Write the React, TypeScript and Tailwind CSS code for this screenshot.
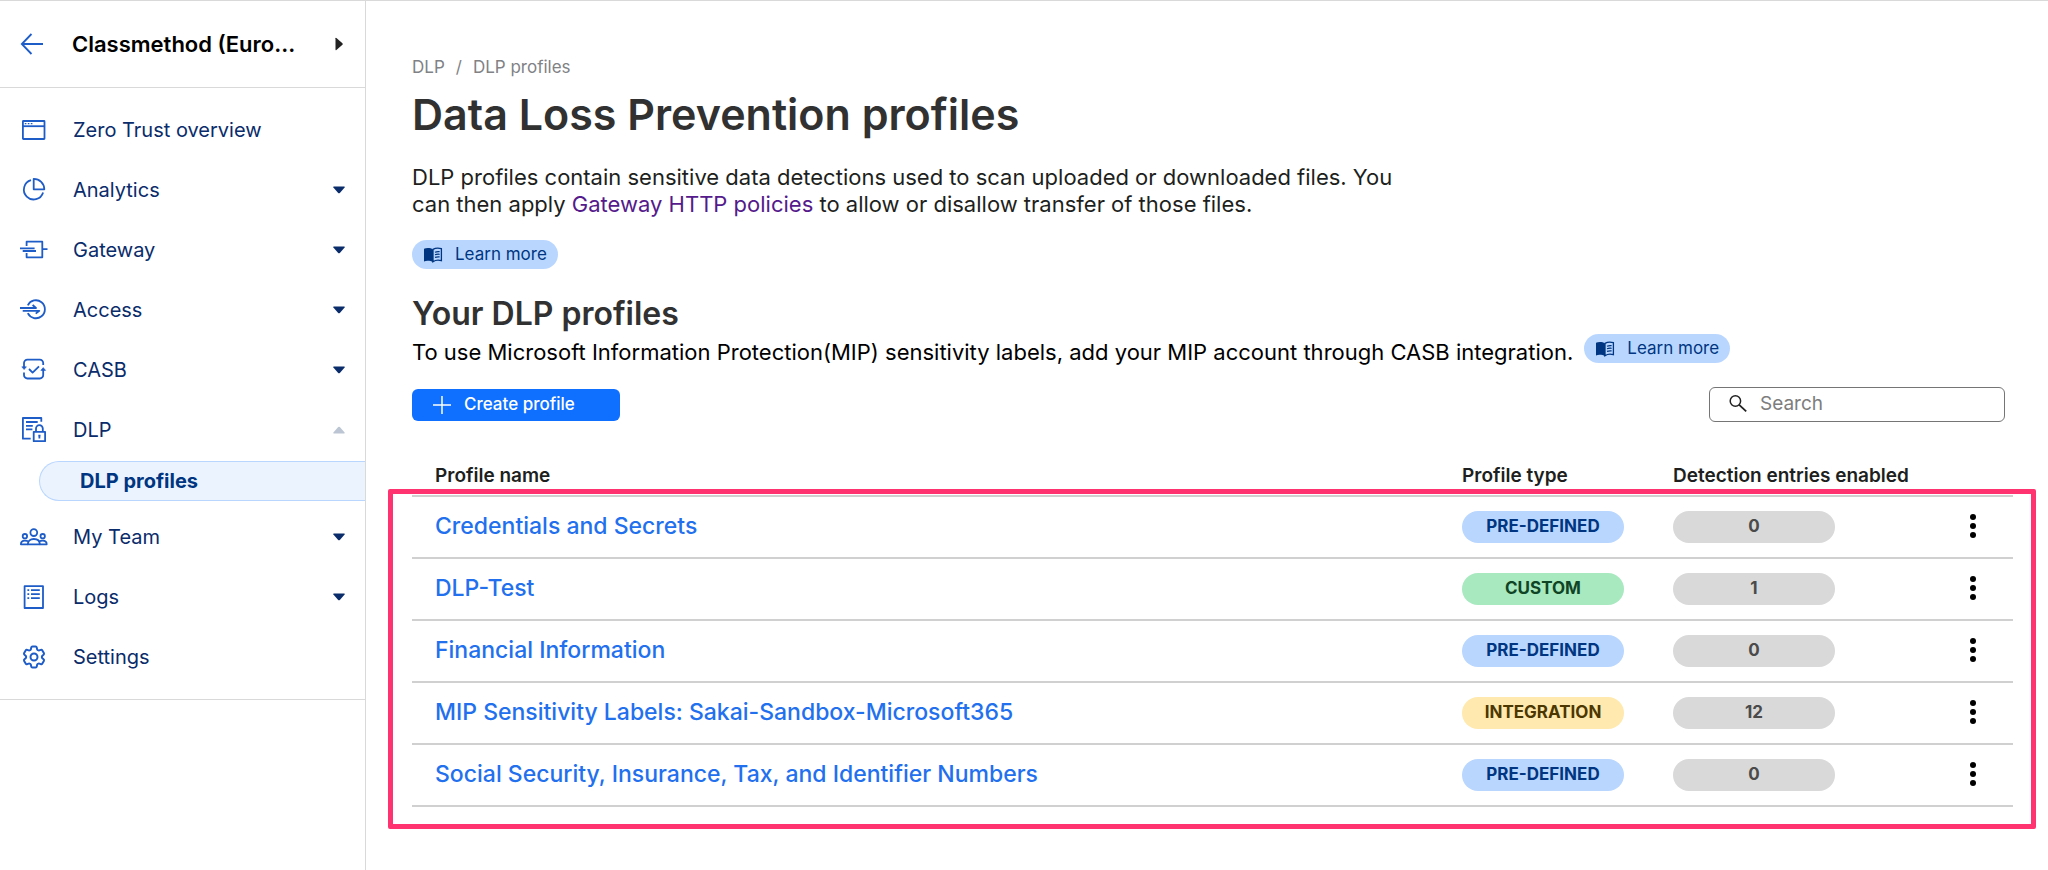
import React, { useState } from "react";
import { HiOutlineCog6Tooth } from "react-icons/hi2";

type IconProps = { children: React.ReactNode };

const NavIcon = ({ children }: IconProps) => (
  <svg
    viewBox="0 0 28 28"
    className="size-7 shrink-0"
    fill="none"
    stroke="currentColor"
    strokeWidth="1.8"
    strokeLinejoin="round"
    aria-hidden="true"
  >
    {children}
  </svg>
);

const OverviewIcon = () => (
  <NavIcon>
    <rect x="2.9" y="5" width="21.6" height="18" rx="0.5" />
    <path d="M2.7 10.2h22" />
    <path d="M4.8 7.6h1.6M7.8 7.6h1.6M10.8 7.6h1.6" strokeWidth="1.4" />
  </NavIcon>
);

const AnalyticsIcon = () => (
  <NavIcon>
    <path d="M11 4.2A9.8 9.8 0 1 0 23.1 16.4" />
    <path d="M13.7 2.8v10.5h10.6A10.5 10.5 0 0 0 13.7 2.8z" />
  </NavIcon>
);

const GatewayIcon = () => (
  <NavIcon>
    <path d="M6.6 10V5.7h15.7v15.6H6.6V17" />
    <path d="M0 12.3h14.6M2.7 15h13.3M22.3 13.2h5.2" />
  </NavIcon>
);

const AccessIcon = () => (
  <NavIcon>
    <path d="M7.8 9.3A9 9 0 1 1 7.8 17.2" />
    <path d="M0 12h16l-3.4-3M2.7 14.8h16.6l-3.6 2.8" />
  </NavIcon>
);

const CasbIcon = () => (
  <NavIcon>
    <path d="M4 12V7a3.4 3.4 0 0 1 3.4-3.4h12.4A3.4 3.4 0 0 1 23.2 7v2" />
    <path d="M23.2 13v6a3.4 3.4 0 0 1-3.4 3.5H7.4A3.4 3.4 0 0 1 4 19v-2.6" />
    <path d="M9 13l3.6 3.6 6.4-6.3" />
    <path d="M1.8 10.8h4.6L4.1 13.6zM20.8 14.4h4.8l-2.4-2.8z" fill="currentColor" strokeWidth="0.6" />
  </NavIcon>
);

const DlpIcon = () => (
  <NavIcon>
    <path d="M10.7 22.7H2.9V2h18.4v3.8" />
    <path d="M6 6h11.7M6 9.8h6.8M6 13.4h6.4" />
    <rect x="13.7" y="15.8" width="11.4" height="9.4" />
    <path d="M16 15.8v-3.3a3.4 3.4 0 0 1 6.8 0v3.3" />
    <path d="M19.4 18.8v3.6M18.3 19.6h2.2" />
  </NavIcon>
);

const TeamIcon = () => (
  <NavIcon>
    <circle cx="13.8" cy="9.6" r="3.4" />
    <circle cx="4.9" cy="13.2" r="2.2" />
    <circle cx="22.7" cy="13.2" r="2.2" />
    <path d="M7.8 21.3c0-3.4 2.4-5.3 6-5.3s6 1.9 6 5.3z" />
    <path d="M7.8 21.3H.9c0-2.6 1.5-3.7 4-3.7 1.4 0 2.5.2 3.3.8M19.8 21.3h6.9c0-2.6-1.5-3.7-4-3.7-1.4 0-2.5.2-3.3.8" />
  </NavIcon>
);

const LogsIcon = () => (
  <NavIcon>
    <rect x="4.6" y="3.2" width="18.4" height="21.8" />
    <path d="M7.4 7.2h1.8M11 7.2h8.8M7.4 11.2h1.8M11 11.2h8.8M7.4 15.2h1.8M11 15.2h8.8" />
  </NavIcon>
);

const SettingsIcon = () => (
  <HiOutlineCog6Tooth className="size-7 shrink-0" strokeWidth={1.7} aria-hidden="true" />
);

const BookIcon = () => (
  <svg viewBox="0 0 20 16" className="h-4 w-5 shrink-0" aria-hidden="true">
    <path d="M10 2.4C7.6.8 3.6.6 1 1.8v12.6c2.8-1 6.4-.8 9 .9z" fill="currentColor" />
    <path
      d="M10 2.4c2.3-1.4 5.8-1.6 8.4-.7v12c-2.8-.8-6-.6-8.4 1z"
      fill="none"
      stroke="currentColor"
      strokeWidth="1.3"
    />
    <path
      d="M12 5.2c1.5-.6 3-.7 4.6-.5M12 7.8c1.5-.6 3-.7 4.6-.5M12 10.4c1.5-.6 3-.7 4.6-.5"
      fill="none"
      stroke="currentColor"
      strokeWidth="1.2"
    />
  </svg>
);

const Caret = ({ open }: { open: boolean }) => (
  <svg
    viewBox="0 0 12 8"
    className={open ? "h-2 w-3 rotate-180 text-[#bcc5d3]" : "h-2 w-3 text-[#0a2c6b]"}
    aria-hidden="true"
  >
    <path d="M.6.6h10.8q.6.3.2.9L6.8 6.9q-.8.8-1.6 0L.4 1.5Q0 .9.6.6z" fill="currentColor" />
  </svg>
);

const navItems = [
  { label: "Zero Trust overview", Icon: OverviewIcon },
  { label: "Analytics", Icon: AnalyticsIcon, expandable: true },
  { label: "Gateway", Icon: GatewayIcon, expandable: true },
  { label: "Access", Icon: AccessIcon, expandable: true },
  { label: "CASB", Icon: CasbIcon, expandable: true },
  { label: "DLP", Icon: DlpIcon, expandable: true, children: ["DLP profiles"] },
  { label: "My Team", Icon: TeamIcon, expandable: true },
  { label: "Logs", Icon: LogsIcon, expandable: true },
  { label: "Settings", Icon: SettingsIcon },
];

const typeStyles = {
  "PRE-DEFINED": "bg-[#b9d6ff] text-[#003681]",
  CUSTOM: "bg-[#a8e9c0] text-[#0f4424]",
  INTEGRATION: "bg-[#ffe9ae] text-[#4d3700]",
};

const profiles: { name: string; type: keyof typeof typeStyles; entries: number }[] = [
  { name: "Credentials and Secrets", type: "PRE-DEFINED", entries: 0 },
  { name: "DLP-Test", type: "CUSTOM", entries: 1 },
  { name: "Financial Information", type: "PRE-DEFINED", entries: 0 },
  { name: "MIP Sensitivity Labels: Sakai-Sandbox-Microsoft365", type: "INTEGRATION", entries: 12 },
  { name: "Social Security, Insurance, Tax, and Identifier Numbers", type: "PRE-DEFINED", entries: 0 },
];

const LearnMore = () => (
  <a
    href="#"
    className="inline-flex h-[29px] w-[146px] shrink-0 items-center gap-3 rounded-full bg-[#b9d6ff] pl-[11px] text-[17px] whitespace-nowrap text-[#003681]"
  >
    <BookIcon />
    Learn more
  </a>
);

const Sidebar = () => {
  const [openItem, setOpenItem] = useState("DLP");

  return (
    <aside className="w-[366px] shrink-0 border-r border-[#d9d9d9]">
      <div className="flex h-[87px] items-center border-b border-[#d9d9d9] pr-[22px] pl-5">
        <a href="#" aria-label="Back" className="text-[#1e5cc8]">
          <svg viewBox="0 0 24 24" className="size-6" fill="none" stroke="currentColor" strokeWidth="1.8">
            <path d="M23 12H2M11.5 2L1.8 12l9.7 10" />
          </svg>
        </a>
        <button className="ml-7 flex flex-1 items-center justify-between text-[22px] font-semibold text-black">
          Classmethod (Euro...
          <svg viewBox="0 0 8 14" className="h-3.5 w-2 text-[#222]" aria-hidden="true">
            <path d="M.5 1.2Q.6.4 1.4 1l6 5.2q.8.8 0 1.6l-6 5.2q-.8.6-.9-.2z" fill="currentColor" />
          </svg>
        </button>
      </div>

      <nav className="border-b border-[#d9d9d9] py-3">
        {navItems.map(({ label, Icon, expandable, children }) => {
          const open = openItem === label;
          return (
            <div key={label}>
              <button
                onClick={() => setOpenItem(open ? "" : label)}
                className="flex h-[60px] w-full items-center pr-5 pl-5 text-xl text-[#0a2c6b]"
              >
                <span className="text-[#1e5cc8]">
                  <Icon />
                </span>
                <span className="ml-[25px] flex-1 text-left">{label}</span>
                {expandable && <Caret open={open} />}
              </button>
              {open &&
                children?.map((child) => (
                  <a
                    key={child}
                    href="#"
                    className="mt-px mb-1.5 ml-[39px] flex h-10 items-center rounded-l-full border border-r-0 border-[#b9d6ff] bg-[#ebf3fe] pl-10 text-xl font-bold text-[#003681]"
                  >
                    {child}
                  </a>
                ))}
            </div>
          );
        })}
      </nav>
    </aside>
  );
};

const App: React.FC = () => {
  const [query, setQuery] = useState("");
  const rows = profiles.filter((p) => p.name.toLowerCase().includes(query.toLowerCase()));

  return (
    <div className="flex min-h-screen border-t border-[#d9d9d9] bg-white font-['Inter','Liberation_Sans',sans-serif] text-[#1d1f20]">
      <Sidebar />

      <main className="min-w-0 flex-1 pt-[57px] pr-[35px] pb-10 pl-[46px]">
        <nav aria-label="Breadcrumb" className="flex h-5 items-center gap-[11px] text-[17px] text-[#808285]">
          <a href="#">DLP</a>
          <span>/</span>
          <span>DLP profiles</span>
        </nav>

        <h1 className="mt-2.5 text-[43px] leading-[52px] font-semibold text-[#313131]">
          Data Loss Prevention profiles
        </h1>

        <p className="mt-6 max-w-[1000px] text-[22px] leading-[27px]">
          DLP profiles contain sensitive data detections used to scan uploaded or downloaded files. You
          can then apply{" "}
          <a href="#" className="text-[#551a8b]">
            Gateway HTTP policies
          </a>{" "}
          to allow or disallow transfer of those files.
        </p>

        <div className="mt-[22px] flex">
          <LearnMore />
        </div>

        <h2 className="mt-[25px] text-[32px] leading-10 font-semibold text-[#313131]">Your DLP profiles</h2>
        <div className="flex items-start gap-[11px]">
          <p className="pt-[5px] text-[22px] leading-[27px] text-black">
            To use Microsoft Information Protection(MIP) sensitivity labels, add your MIP account through
            CASB integration.
          </p>
          <LearnMore />
        </div>

        {/* TOOLBAR */}
        <div className="mt-[21px] flex items-center justify-between pr-2">
          <button className="flex h-8 w-[208px] items-center gap-3 rounded-md bg-[#0f6fff] pl-5 text-[17px] font-medium text-white">
            <svg viewBox="0 0 20 20" className="size-5" stroke="currentColor" strokeWidth="1.5" aria-hidden="true">
              <path d="M10 1v18M1 10h18" />
            </svg>
            Create profile
          </button>
          <label className="flex h-[35px] w-[296px] items-center gap-3 rounded-md border border-[#757575] pl-[18px]">
            <svg viewBox="0 0 20 20" className="size-5 shrink-0" fill="none" stroke="#222" aria-hidden="true">
              <circle cx="7.4" cy="6" r="5.2" strokeWidth="1.5" />
              <path d="M11.2 9.8l7 6.6" strokeWidth="1.8" />
            </svg>
            <input
              type="search"
              aria-label="Search profiles"
              placeholder="Search"
              value={query}
              onChange={(e) => setQuery(e.target.value)}
              className="w-full bg-transparent text-[19px] outline-none placeholder:text-[#7d7d7d]"
            />
          </label>
        </div>

        {/* PROFILES TABLE */}
        <div className="relative mt-[35px]">
          <table className="w-full table-fixed border-separate border-spacing-0">
            <thead>
              <tr className="h-10 text-left text-[19px]">
                <th className="border-b-2 border-[#d0d0d0] pl-[23px] font-semibold">Profile name</th>
                <th className="w-[211px] border-b-2 border-[#d0d0d0] font-semibold">Profile type</th>
                <th className="w-[260px] border-b-2 border-[#d0d0d0] font-semibold">
                  Detection entries enabled
                </th>
                <th className="w-20 border-b-2 border-[#d0d0d0]" aria-label="Actions" />
              </tr>
            </thead>
            <tbody>
              {rows.map(({ name, type, entries }) => (
                <tr key={name} className="h-[62px]">
                  <td className="border-b-2 border-[#d0d0d0] pb-0.5 pl-[23px]">
                    <a href="#" className="text-[23px] font-medium text-[#2270ee]">
                      {name}
                    </a>
                  </td>
                  <td className="border-b-2 border-[#d0d0d0]">
                    <span
                      className={`flex h-8 w-[162px] items-center justify-center rounded-full text-[17px] font-bold ${typeStyles[type]}`}
                    >
                      {type}
                    </span>
                  </td>
                  <td className="border-b-2 border-[#d0d0d0]">
                    <span className="flex h-8 w-[162px] items-center justify-center rounded-full bg-[#d9d9d9] text-[17px] font-bold text-[#4a4a4a]">
                      {entries}
                    </span>
                  </td>
                  <td className="border-b-2 border-[#d0d0d0] pb-0.5">
                    <button aria-label={`Actions for ${name}`} className="mx-auto block">
                      <svg viewBox="0 0 8 24" className="h-6 w-2" fill="black">
                        <circle cx="4" cy="3" r="3" />
                        <circle cx="4" cy="12" r="3" />
                        <circle cx="4" cy="21" r="3" />
                      </svg>
                    </button>
                  </td>
                </tr>
              ))}
            </tbody>
          </table>

          {/* highlight drawn over the rows */}
          <div className="pointer-events-none absolute top-8 -right-[23px] -bottom-[22px] -left-6 rounded-xs border-[5px] border-[#ff3370]" />
        </div>
      </main>
    </div>
  );
};

export default App;
